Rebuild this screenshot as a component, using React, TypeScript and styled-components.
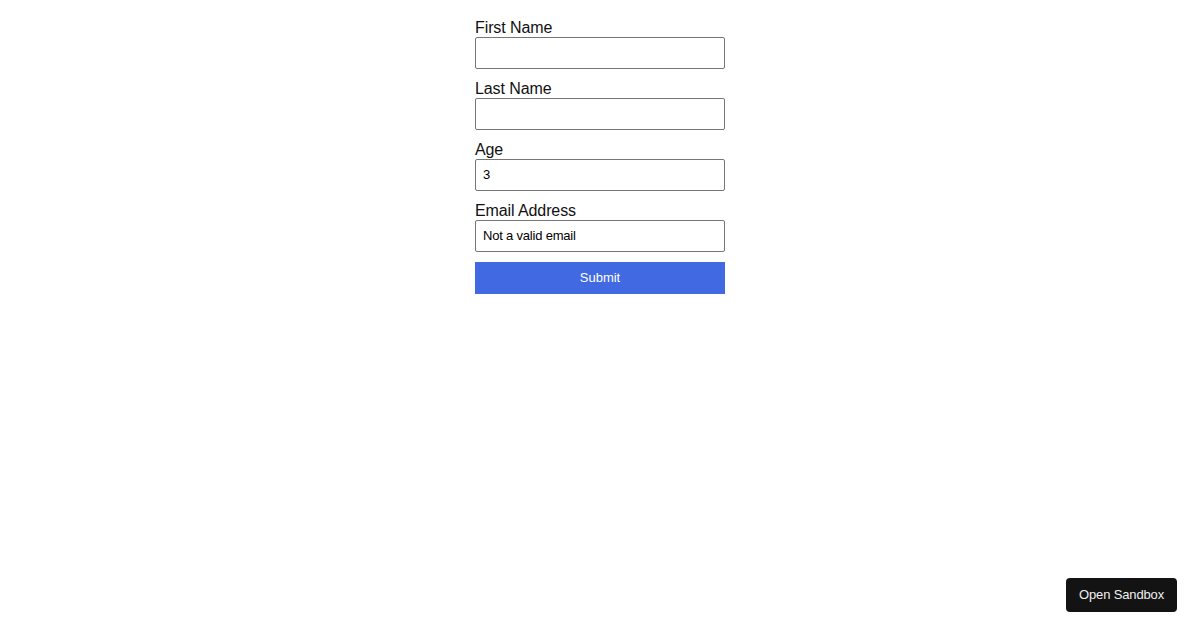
import React from "react";
import styled, { createGlobalStyle } from "styled-components";

const GlobalStyle = createGlobalStyle`
  body {
    margin: 0;
    background: #ffffff;
    font-family: "Liberation Sans", Arial, sans-serif;
  }
`;

const Page = styled.div`
  display: flex;
  justify-content: center;
  padding-top: 19px;
  min-height: 611px;
`;

const Form = styled.form`
  width: 250px;
  display: flex;
  flex-direction: column;
`;

const Field = styled.div<{ $gap: number }>`
  display: flex;
  flex-direction: column;
  margin-bottom: ${(p) => p.$gap}px;
`;

const Label = styled.label`
  font-size: 16px;
  line-height: 18px;
  color: #111;
  letter-spacing: -0.1px;
`;

const Input = styled.input`
  box-sizing: border-box;
  height: 32px;
  width: 100%;
  border: 1px solid #767676;
  border-radius: 2px;
  padding: 0 7px 2px;
  font-family: "Liberation Sans", Arial, sans-serif;
  font-size: 13px;
  letter-spacing: -0.2px;
  color: #000;
  outline: none;
`;

const Submit = styled.button`
  height: 32px;
  width: 100%;
  border: none;
  background: #4169e1;
  color: #ffffff;
  font-family: "Liberation Sans", Arial, sans-serif;
  font-size: 13px;
  padding: 0 0 2px;
  cursor: pointer;
`;

const SandboxButton = styled.button`
  position: fixed;
  right: 23px;
  bottom: 18px;
  height: 34px;
  padding: 0 13px 2px;
  border: none;
  border-radius: 4px;
  background: #131313;
  color: #f0f0f0;
  font-family: "Liberation Sans", Arial, sans-serif;
  font-size: 13px;
  letter-spacing: -0.15px;
`;

const fields = [
  { label: "First Name", value: "" },
  { label: "Last Name", value: "" },
  { label: "Age", value: "3" },
  { label: "Email Address", value: "Not a valid email" },
];

const App = () => {
  return (
    <>
      <GlobalStyle />
      <Page>
        <Form onSubmit={(e) => e.preventDefault()}>
          {fields.map((f, i) => (
            <Field key={f.label} $gap={i === fields.length - 1 ? 10 : 11}>
              <Label>{f.label}</Label>
              <Input defaultValue={f.value} />
            </Field>
          ))}
          <Submit type="submit">Submit</Submit>
        </Form>
      </Page>
      <SandboxButton>Open Sandbox</SandboxButton>
    </>
  );
};

export default App;
